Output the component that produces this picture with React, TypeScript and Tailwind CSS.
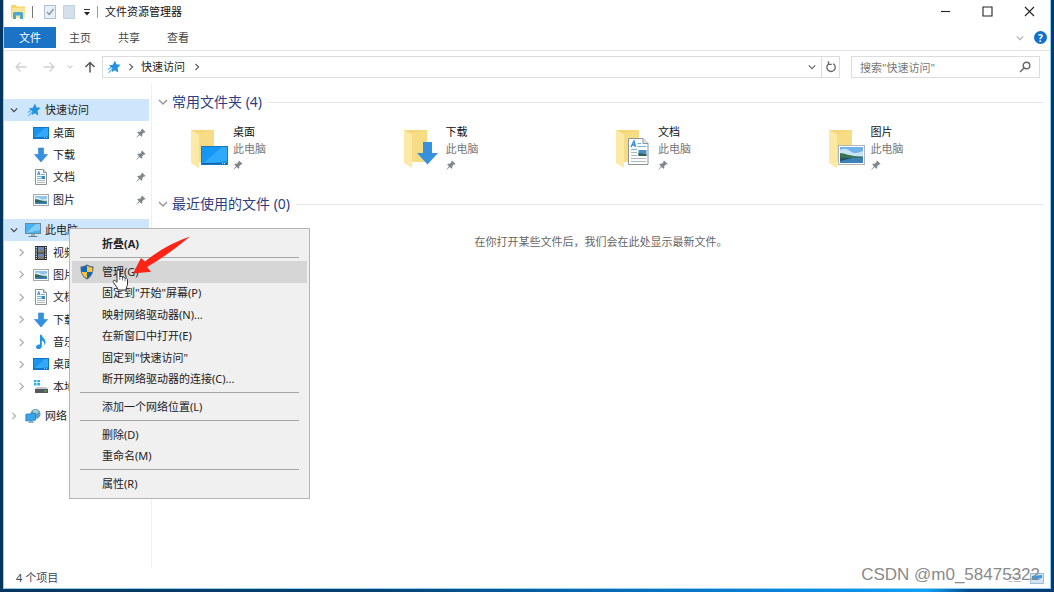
import React from "react";

type IconProps = { className?: string };

const iconSize = "size-4 shrink-0";

function Chevron({ className = "size-2.5" }: IconProps) {
  return (
    <svg viewBox="0 0 10 10" className={"shrink-0 " + className} fill="none" stroke="currentColor" strokeWidth="1.4">
      <path d="M3 1l4 4-4 4" />
    </svg>
  );
}

function ChevronDown({ className = "size-2.5" }: IconProps) {
  return (
    <svg viewBox="0 0 10 10" className={"shrink-0 " + className} fill="none" stroke="currentColor" strokeWidth="1.5">
      <path d="M1 3l4 4 4-4" />
    </svg>
  );
}

function Star() {
  return (
    <svg viewBox="0 0 14 14" className="size-3.5 shrink-0">
      <path d="M8 .6l1.400 3.700 4.200.4-3 3 .7 4.700L7.600 10.300l-3 2 .7-4L1.800 5.500l4-.8z" fill="#2592e0" />
      <path d="M5 9.200L1.400 12.800M4.600 7.200L.8 9.600" stroke="#57b3ee" strokeWidth="1.200" />
    </svg>
  );
}

function Pin({ className = "" }: IconProps) {
  return (
    <svg viewBox="0 0 10 10" className={"size-2.5 shrink-0 " + className}>
      <path d="M6 .4L9.600 4l-.9.6-.8-.2-1.700 1.800.1 1.800-.9.8L3.700 7 .6 9.700l-.3-.3L3 6.300 1.200 4.600l.8-.9 1.900.1L5.600 2.100l-.2-.9z" fill="#7f868c" />
    </svg>
  );
}

function DesktopIcon() {
  return (
    <svg viewBox="0 0 16 16" className={iconSize}>
      <rect x=".5" y="2.500" width="15" height="11" fill="#1a95ee" stroke="#0f75c8" />
      <path d="M1 13L12 3h3v8z" fill="#35a9f8" />
      <path d="M1 12.500h14" stroke="#0b6ab5" strokeWidth=".7" />
      <path d="M11 12.500h3" stroke="#b6dcf5" strokeWidth=".7" strokeDasharray="1 1" />
    </svg>
  );
}

function DownloadIcon() {
  return (
    <svg viewBox="0 0 16 16" className={iconSize}>
      <path d="M5.500 1h5v6.500h4L8 15 1.500 7.500h4z" fill="#3391e2" stroke="#2b7fc9" strokeWidth=".6" />
    </svg>
  );
}

function DocumentIcon() {
  return (
    <svg viewBox="0 0 16 16" className={iconSize}>
      <path d="M2.500.5h8l3 3v12h-11z" fill="#fafcfd" stroke="#8b9499" />
      <path d="M10.500.5v3h3" fill="#dfe5e8" stroke="#8b9499" />
      <path d="M4.500 6l1.300-3.500L7 6M5 5h1.600" stroke="#2a87cd" fill="none" strokeWidth=".9" />
      <path d="M8 5.500h4M4 7.500h4M4 9.500h4" stroke="#58a9dd" strokeWidth=".9" />
      <path d="M4 11.500h8M4 13.500h8" stroke="#aab2b6" strokeWidth=".9" />
      <rect x="8.500" y="7" width="3.500" height="3" fill="#3f86ae" />
    </svg>
  );
}

function PictureIcon() {
  return (
    <svg viewBox="0 0 16 16" className={iconSize}>
      <rect x=".5" y="2.500" width="15" height="11" fill="#fff" stroke="#a3a9ad" />
      <rect x="2" y="4" width="12" height="8" fill="#8ec5ef" />
      <path d="M2 6.500q3-2 5 0t7 0v2H2z" fill="#d8ecf8" />
      <path d="M2 7.200c3-.4 5 1.700 12 2.300V11H2z" fill="#2e6657" />
      <path d="M2 10.300h12V12H2z" fill="#3c7fb4" />
    </svg>
  );
}

function ComputerIcon() {
  return (
    <svg viewBox="0 0 16 16" className={iconSize}>
      <rect x=".5" y="1.500" width="15" height="10" fill="#49b3ef" stroke="#6f8795" />
      <path d="M1 11L11 2h4v6z" fill="#7fcdf8" />
      <path d="M6 12h4v2H6z" fill="#9db0ba" />
      <path d="M3.500 14.500h9" stroke="#5f8298" />
    </svg>
  );
}

function VideoIcon() {
  return (
    <svg viewBox="0 0 16 16" className={iconSize}>
      <rect x="2" y="1" width="12" height="14" fill="#2d3033" />
      <path d="M3.300 2v12M12.700 2v12" stroke="#f2f2f2" strokeWidth="1.200" strokeDasharray="1.200 1" />
      <rect x="5" y="2" width="6" height="5.500" fill="#6c88b5" />
      <rect x="5" y="8.500" width="6" height="5.500" fill="#6c88b5" />
      <path d="M5 7.500l3-3 3 3zM5 14l2-3 4 3z" fill="#8b7645" />
    </svg>
  );
}

function MusicIcon() {
  return (
    <svg viewBox="0 0 16 16" className={iconSize}>
      <path d="M7 .8h1.600c.3 3 4.600 4 3.800 8.400-.2 1-.7 1.700-1.200 2.300.6-2.600-.6-4.400-2.400-4.900v5.600c0 1.700-1.400 2.900-3.200 2.900-1.600 0-2.600-.9-2.600-2.100 0-1.700 2-2.900 4-2.400z" fill="#1f93e4" />
    </svg>
  );
}

function DriveIcon() {
  return (
    <svg viewBox="0 0 16 16" className={iconSize}>
      <path d="M1 1h2.500v2.300H1zM4.300 1H7v2.300H4.300zM1 4.100h2.500v2.300H1zM4.300 4.100H7v2.300H4.300z" fill="#24b2e8" />
      <path d="M3.500 8h10l1.500 2H2z" fill="#c2c7ca" />
      <rect x="2" y="10" width="13" height="4" fill="#53595d" />
      <path d="M11.500 12h2" stroke="#5ee06a" />
    </svg>
  );
}

function NetworkIcon() {
  return (
    <svg viewBox="0 0 16 16" className={iconSize}>
      <circle cx="10.500" cy="6" r="5" fill="#5b9fc4" />
      <path d="M8 2.500c2-1.500 5-.5 5.500 1.500L11 6 8.500 5z" fill="#a9d3cf" />
      <path d="M.8 6.200l9.700-1v7l-9.700.8z" fill="#36a5ea" stroke="#2b7bb3" strokeWidth=".7" />
      <path d="M3 15h6l-1-2H4z" fill="#8ab3ca" />
    </svg>
  );
}

function Folder({ children }: { children: React.ReactNode }) {
  return (
    <svg viewBox="0 0 38 40" className="h-10 w-[38px] shrink-0">
      <path d="M1 2h23v32H7L1 35z" fill="#f5d679" />
      <path d="M7 6L24 2v32H7z" fill="#f7dc86" />
      <path d="M1 2l8 4v34l-8-5z" fill="#fde9a6" />
      {children}
    </svg>
  );
}

const desktopArt = (
  <>
    <rect x="11.500" y="18.500" width="26" height="18" fill="#1597f5" stroke="#1a79bd" />
    <path d="M12 36L32 19h5v14z" fill="#30a8fb" />
    <path d="M12 35.500h25" stroke="#0c65ad" />
    <path d="M32 35.500h4" stroke="#cfe7f7" strokeDasharray="1 1" />
  </>
);
const downloadArt = <path d="M20 14h9v11h6L24.500 36.500 14 25h6z" fill="#3691df" />;
const documentArt = (
  <>
    <path d="M13.500 10.500H28l5 5v21H13.500z" fill="#fbfcfd" stroke="#8d9498" />
    <path d="M28 10.500v5h5" fill="#e3e7e9" stroke="#8d9498" />
    <path d="M16 19l3-6 1.500 6M17 17h3" fill="none" stroke="#2a8ad2" strokeWidth="1.300" />
    <path d="M22.500 15.500h4M22.500 18.500h9M16 21.500h6" stroke="#6fb5e4" strokeWidth="1.200" />
    <path d="M16 24.500h6M16 27.500h6M16 30.500h15M16 33.500h15" stroke="#b1b7ba" />
    <rect x="23.500" y="22" width="8" height="6" fill="#4a8fc0" />
    <path d="M23.500 25l8 1.500V28h-8z" fill="#33604f" />
  </>
);
const pictureArt = (
  <>
    <rect x="10.500" y="17.500" width="26" height="19" fill="#fff" stroke="#b1b5b8" />
    <rect x="12" y="19" width="23" height="16" fill="#6fb1ea" />
    <path d="M12 22q6-3 10 1t13 0v5H12z" fill="#c9e2f4" />
    <path d="M12 25c5 0 8 3 23 4v2H12z" fill="#3a7351" />
    <path d="M12 29.500l23 .5v5H12z" fill="#3d81b8" />
    <path d="M12 29.500l13 .5-13 3z" fill="#24505b" />
  </>
);

function ShieldIcon() {
  return (
    <svg viewBox="0 0 16 16" className={iconSize}>
      <path d="M8 .5c2 1.300 4.200 1.900 6.500 2 .2 6-1.700 10.500-6.500 13C3.200 13 1.300 8.500 1.500 2.500 3.800 2.400 6 1.800 8 .5z" fill="#4f6d83" />
      <path d="M8 1.800v6.200H2.800c-.2-1.500-.3-2.900-.2-4.300C4.500 3.500 6.300 2.900 8 1.800zM8 8h5.200c-.8 2.800-2.500 5-5.200 6.300z" fill="#1268b4" />
      <path d="M8 1.800c1.700 1.100 3.500 1.700 5.400 1.900.1 1.400 0 2.800-.2 4.300H8zM8 8v6.300C5.300 13 3.600 10.800 2.800 8z" fill="#fac53c" />
    </svg>
  );
}

type TreeItem = { label: string; icon: React.ReactNode };

const quickItems: TreeItem[] = [
  { label: "桌面", icon: <DesktopIcon /> },
  { label: "下载", icon: <DownloadIcon /> },
  { label: "文档", icon: <DocumentIcon /> },
  { label: "图片", icon: <PictureIcon /> },
];

const computerItems: TreeItem[] = [
  { label: "视频", icon: <VideoIcon /> },
  { label: "图片", icon: <PictureIcon /> },
  { label: "文档", icon: <DocumentIcon /> },
  { label: "下载", icon: <DownloadIcon /> },
  { label: "音乐", icon: <MusicIcon /> },
  { label: "桌面", icon: <DesktopIcon /> },
  { label: "本地磁盘", icon: <DriveIcon /> },
];

const folders = [
  { name: "桌面", art: desktopArt },
  { name: "下载", art: downloadArt },
  { name: "文档", art: documentArt },
  { name: "图片", art: pictureArt },
];

function TitleBar() {
  return (
    <header className="flex h-[27px] items-center pb-1 pl-1.5">
      <div className="flex flex-1 items-center">
        <svg viewBox="0 0 16 16" className={iconSize}>
          <path d="M1 1h5l1 1.500h8V14H1z" fill="#f6d671" />
          <path d="M2 4h13v10H2z" fill="#fbe596" />
          <path d="M3 15V9.500Q3 8 4.500 8h7Q13 8 13 9.500V15h-3v-3.500H6V15z" fill="#4aa9d3" />
        </svg>
        <span className="ml-1.5 h-3 w-px bg-[#777]" />
        <button aria-label="属性" className="ml-2.5">
          <svg viewBox="0 0 14 16" className="h-4 w-3.5">
            <path d="M1.500 1.500h11v13h-11z" fill="#e9eff6" stroke="#aebfcf" />
            <path d="M4 8l2.300 2.500L10.500 5" fill="none" stroke="#8297ad" strokeWidth="1.400" />
          </svg>
        </button>
        <button aria-label="新建文件夹" className="ml-1.5">
          <svg viewBox="0 0 12 16" className="h-4 w-3">
            <path d="M.5 1.500h11v13H.5z" fill="#d5e0ec" stroke="#c3d1de" />
          </svg>
        </button>
        <button aria-label="自定义快速访问工具栏" className="ml-2">
          <svg viewBox="0 0 8 8" className="size-2">
            <path d="M1 1.500h6" stroke="#333" />
            <path d="M1 4h6L4 7.500z" fill="#222" />
          </svg>
        </button>
        <span className="ml-1.5 h-3 w-px bg-[#999]" />
        <h1 className="ml-[7px] text-[11px] text-[#111]">文件资源管理器</h1>
      </div>
      <div className="flex text-[#222]">
        {[
          { label: "最小化", d: "M1 5.500h9" },
          { label: "最大化", d: "M1 1h9v9H1z" },
          { label: "关闭", d: "M1 1l9 9M10 1l-9 9" },
        ].map((b) => (
          <button key={b.label} aria-label={b.label} className="flex w-[42px] justify-center">
            <svg viewBox="0 0 11 11" className="size-[11px]" fill="none" stroke="currentColor" strokeWidth="1.100">
              <path d={b.d} />
            </svg>
          </button>
        ))}
      </div>
    </header>
  );
}

function RibbonTabs() {
  return (
    <div className="flex h-6 items-start border-b border-[#e2e3e4]">
      <button className="h-[21px] w-[52px] bg-[#1a73c4] text-white">文件</button>
      <div className="flex h-[21px] flex-1 items-center gap-[27px] pl-[13px] text-[#444]">
        <button>主页</button>
        <button>共享</button>
        <button>查看</button>
      </div>
      <div className="flex h-[21px] items-center gap-2.5 pr-[3px]">
        <button aria-label="展开功能区" className="text-[#b0b0b0]">
          <ChevronDown className="size-2" />
        </button>
        <button aria-label="帮助" className="flex size-[13px] items-center justify-center rounded-full bg-[#1170cb] text-[10px] font-bold text-white">
          ?
        </button>
      </div>
    </div>
  );
}

function AddressRow() {
  return (
    <div className="flex h-8 items-center pr-2.5 pl-[11px]">
      <div className="flex w-[87px] shrink-0 items-center">
        <button aria-label="后退" className="text-[#cfcfcf]">
          <svg viewBox="0 0 12 12" className="size-3" fill="none" stroke="currentColor" strokeWidth="1.300">
            <path d="M11.500 6H1M5.500 1.500L1 6l4.500 4.500" />
          </svg>
        </button>
        <button aria-label="前进" className="ml-4 text-[#cfcfcf]">
          <svg viewBox="0 0 12 12" className="size-3" fill="none" stroke="currentColor" strokeWidth="1.300">
            <path d="M.5 6H11M6.500 1.500L11 6l-4.500 4.500" />
          </svg>
        </button>
        <button aria-label="最近浏览的位置" className="ml-3 text-[#d2d2d2]">
          <svg viewBox="0 0 6 6" className="size-1.5" fill="none" stroke="currentColor" strokeWidth="1.200">
            <path d="M.5 1.500L3 4l2.500-2.500" />
          </svg>
        </button>
        <button aria-label="上移" className="ml-[11px] text-[#555]">
          <svg viewBox="0 0 12 12" className="size-3" fill="none" stroke="currentColor" strokeWidth="1.500">
            <path d="M6 11.500V1.500M1.500 6L6 1.500 10.500 6" />
          </svg>
        </button>
      </div>
      <div className="flex h-[22px] flex-1 items-center border border-[#dcdcdc] pl-1">
        <Star />
        <Chevron className="ml-1.5 size-2 text-[#555]" />
        <button className="ml-1.5 text-[#222]">快速访问</button>
        <Chevron className="ml-2 size-2 text-[#555]" />
        <button aria-label="以前的位置" className="mr-[5px] ml-auto text-[#666]">
          <ChevronDown className="size-2" />
        </button>
        <button aria-label="刷新" className="flex h-5 w-[18px] items-center justify-center border-l border-[#dcdcdc] text-[#666]">
          <svg viewBox="0 0 12 12" className="size-3" fill="none" stroke="currentColor" strokeWidth="1.300">
            <path d="M8.200 2.700A4.200 4.200 0 1 1 3.500 3M3.500.3V3.300h3.200" />
          </svg>
        </button>
      </div>
      <div className="ml-[11px] flex h-[22px] w-[189px] items-center border border-[#dcdcdc] pr-2 pl-2">
        <input type="text" aria-label="搜索" placeholder={'搜索"快速访问"'} className="h-5 min-w-0 flex-1 bg-transparent text-[#333] outline-none placeholder:text-[#777]" />
        <svg viewBox="0 0 12 12" className="size-3" fill="none" stroke="#666" strokeWidth="1.400">
          <circle cx="7.500" cy="4.500" r="3.300" />
          <path d="M5 7L1 11" />
        </svg>
      </div>
    </div>
  );
}

function RootRow({ label, icon, selected, open }: { label: string; icon: React.ReactNode; selected?: boolean; open?: boolean }) {
  return (
    <button className={"flex w-full items-center pl-1.5 text-left " + (selected ? "bg-[#cde6fb]" : "")}>
      {open ? <ChevronDown className="mr-0.5 size-2 text-[#444]" /> : <Chevron className="mr-0.5 size-2 text-[#aaa]" />}
      <span className="ml-[5px] flex w-4 justify-end">{icon}</span>
      <span className="ml-1">{label}</span>
    </button>
  );
}

function ChildRow({ item, pinned }: { item: TreeItem; pinned?: boolean }) {
  return (
    <button className="flex w-full items-center pr-[3px] pl-[13px] text-left">
      <span className="w-2.5">{!pinned && <Chevron className="size-[9px] text-[#aaa]" />}</span>
      <span className="ml-1.5">{item.icon}</span>
      <span className="ml-1 flex-1">{item.label}</span>
      {pinned && <Pin />}
    </button>
  );
}

function Sidebar() {
  return (
    <nav className="w-[148px] shrink-0 border-r border-[#f0f0f0] pt-4 pr-0.5">
      <div className="grid h-28 auto-rows-fr">
        <RootRow label="快速访问" icon={<Star />} selected open />
        {quickItems.map((item) => (
          <ChildRow key={item.label} item={item} pinned />
        ))}
      </div>
      <div className="mt-2 grid h-[179px] auto-rows-fr">
        <RootRow label="此电脑" icon={<ComputerIcon />} selected open />
        {computerItems.map((item) => (
          <ChildRow key={item.label} item={item} />
        ))}
      </div>
      <div className="mt-[7px] grid h-[22px]">
        <RootRow label="网络" icon={<NetworkIcon />} />
      </div>
    </nav>
  );
}

function SectionTitle({ children }: { children: React.ReactNode }) {
  return (
    <h2 className="flex h-5 items-center text-[14px] text-[#2f3d80]">
      <ChevronDown className="mr-1 size-2.5 text-[#999]" />
      {children}
      <span className="ml-1.5 h-px flex-1 bg-[#e6e6e6]" />
    </h2>
  );
}

function Content() {
  return (
    <main className="flex-1 pt-[9px] pr-1.5 pl-1.5">
      <SectionTitle>常用文件夹 (4)</SectionTitle>
      <div className="mt-4 grid grid-cols-4 pr-1 pl-8">
        {folders.map((f) => (
          <button key={f.name} className="flex gap-[5px] text-left">
            <Folder>{f.art}</Folder>
            <span className="-mt-1 flex flex-col">
              <span className="h-4 leading-4 text-[#111]">{f.name}</span>
              <span className="h-[18px] leading-[18px] text-[#777]">此电脑</span>
              <Pin className="mt-0.5" />
            </span>
          </button>
        ))}
      </div>
      <div className="pt-6">
        <SectionTitle>最近使用的文件 (0)</SectionTitle>
      </div>
      <p className="mt-5 text-center text-[#666]">在你打开某些文件后，我们会在此处显示最新文件。</p>
    </main>
  );
}

function MenuItem({ children, className = "", icon }: { children: React.ReactNode; className?: string; icon?: React.ReactNode }) {
  return (
    <button role="menuitem" className={"flex h-full min-h-[21px] w-full items-center text-left " + className}>
      <span className="flex w-[30px] justify-center">{icon}</span>
      {children}
    </button>
  );
}

function Separator() {
  return <hr className="mx-2 mt-0.5 mb-[3px] border-[#a5a5a5]" />;
}

function ContextMenu() {
  return (
    <div role="menu" className="absolute top-[228px] left-[69px] w-[241px] border border-[#b4b4b4] bg-[#f0f0f0] px-0.5 pt-1 pb-[3px] text-[#222]">
      <div className="h-[22px]">
        <MenuItem className="font-bold">折叠(A)</MenuItem>
      </div>
      <Separator />
      <div className="grid h-[129px] auto-rows-fr">
        <MenuItem className="bg-[#d6d6d6]" icon={<ShieldIcon />}>管理(G)</MenuItem>
        <MenuItem>固定到"开始"屏幕(P)</MenuItem>
        <MenuItem>映射网络驱动器(N)...</MenuItem>
        <MenuItem>在新窗口中打开(E)</MenuItem>
        <MenuItem>固定到"快速访问"</MenuItem>
        <MenuItem>断开网络驱动器的连接(C)...</MenuItem>
      </div>
      <Separator />
      <div className="h-[22px]">
        <MenuItem>添加一个网络位置(L)</MenuItem>
      </div>
      <Separator />
      <div className="grid h-[43px] auto-rows-fr">
        <MenuItem>删除(D)</MenuItem>
        <MenuItem>重命名(M)</MenuItem>
      </div>
      <Separator />
      <div className="h-[22px]">
        <MenuItem>属性(R)</MenuItem>
      </div>
    </div>
  );
}

function Pointer() {
  return (
    <>
      <svg viewBox="0 0 17 22" className="absolute top-[269px] left-[112px] h-[22px] w-[17px]">
        <path
          d="M5 2.200C5 .5 7.800.5 7.800 2.200V8c.8-.9 2.500-.6 2.700.5.900-.7 2.300-.3 2.500.8 1-.5 2.500 0 2.500 1.500V15c0 2-1.200 3-1.500 6H6c-.3-2.500-2-3.500-4.500-7.500C.5 12 2 10.700 3.300 11.700L5 13.300z"
          fill="#fff"
          stroke="#333"
          strokeWidth="1"
        />
        <path d="M7.800 8v3M10.500 8.500v3M13 9.300v3" stroke="#555" strokeWidth=".8" />
      </svg>
      <svg viewBox="0 0 58 40" className="absolute top-[236px] left-[133px] h-10 w-[58px]">
        <path d="M0 37.500L8 22l4 3.500Q32 9 57 .5 35 19 14 31l4 4.800z" fill="#fb2417" />
      </svg>
    </>
  );
}

function StatusBar() {
  return (
    <footer className="flex h-5 items-center justify-between pr-1.5 pl-3 text-[#3c4660]">
      <span>4 个项目</span>
      <span className="flex items-center gap-2">
        <button aria-label="详细信息">
          <svg viewBox="0 0 14 10" className="h-2.5 w-3.5" fill="none" stroke="#bbb">
            <path d="M.5 1.500h4M6 1.500h7M.5 5h4M6 5h7M.5 8.500h4M6 8.500h7" />
          </svg>
        </button>
        <button aria-label="大图标">
          <svg viewBox="0 0 14 11" className="h-[11px] w-3.5">
            <rect x=".5" y=".5" width="13" height="10" fill="#cfe5f6" stroke="#a3bccf" />
            <path d="M2 3l10-1v3L2 7z" fill="#3f98dd" />
          </svg>
        </button>
      </span>
    </footer>
  );
}

export default function App() {
  return (
    <div
      lang="zh-CN"
      className="relative flex min-h-screen flex-col bg-[linear-gradient(to_right,#06365f_0%,#05406f_35%,#0865ad_55%,#0a84dc_75%,#12a0f5_88%,#06498a_92%,#063a72_100%)] pr-[3px] pb-[3px] pl-[3px] font-['Noto_Sans','Noto_Sans_CJK_SC',sans-serif] text-[11px] leading-4 text-[#222]"
    >
      <div className="flex flex-1 flex-col border-x border-b border-[#8fd0f5] bg-white">
        <TitleBar />
        <RibbonTabs />
        <AddressRow />
        <div className="flex flex-1">
          <Sidebar />
          <Content />
        </div>
        <StatusBar />
      </div>
      <ContextMenu />
      <Pointer />
      <p className="absolute right-[14px] bottom-[5px] font-['Liberation_Sans',sans-serif] text-[17px] leading-6 text-[#8a8a8a]">CSDN @m0_58475322</p>
    </div>
  );
}
